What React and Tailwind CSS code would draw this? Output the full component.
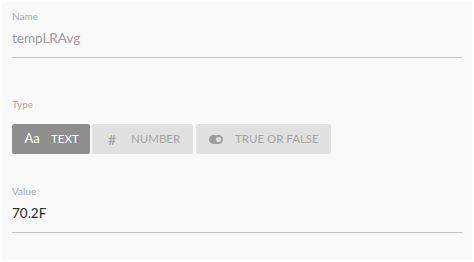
import React from 'react';

const types = [
  { id: 'text', label: 'TEXT', icon: 'Aa', width: 'w-[78px]' },
  { id: 'number', label: 'NUMBER', icon: '#', width: 'w-[101px]' },
  { id: 'bool', label: 'TRUE OR FALSE', icon: null, width: 'w-[135px]' },
];

const ToggleIcon = () => (
  <svg width="14" height="9" viewBox="0 0 14 9">
    <rect x="0" y="0" width="14" height="9" rx="4.5" fill="#9e9e9e" />
    <circle cx="9.5" cy="4.5" r="2.6" fill="#dedede" />
  </svg>
);

const Field = ({ label, value, dark }) => (
  <div className="px-[10px]">
    <div className="text-[10px] leading-[12px] text-[#aaaaaa]">{label}</div>
    <div
      className={`mt-[6px] text-[13.5px] leading-[20px] ${dark ? 'text-[#2b2b2b]' : 'text-[#9b9b9b]'}`}
    >
      {value}
    </div>
    <div className="mt-[9px] h-px bg-[#c4c4c4]" />
  </div>
);

export default function App() {
  const selected = 'text';
  return (
    <div
      className="w-[474px] h-[262px] bg-white p-[2px]"
      style={{ fontFamily: 'Lato, "Open Sans", sans-serif' }}
    >
      <div className="h-full bg-[#f9f9f9] pt-[8px] pr-[0px]">
        <Field label="Name" value="tempLRAvg" />

        <div className="px-[10px] mt-[40px]">
          <div className="text-[10px] leading-[12px] text-[#aaaaaa]">Type</div>
          <div className="mt-[14px] flex gap-[2px]">
            {types.map((t) => {
              const on = t.id === selected;
              return (
                <div
                  key={t.id}
                  className={`${t.width} h-[30px] flex items-center rounded-[2px] pl-[13px] text-[11.5px] ${
                    on ? 'bg-[#8e8e8e] text-white' : 'bg-[#e1e1e1] text-[#a4a4a4]'
                  } ${t.id === 'bool' ? 'ml-[1px]' : ''}`}
                >
                  <span
                    className={`inline-flex w-[14px] justify-center ${
                      on ? 'text-white' : 'text-[#9a9a9a]'
                    } ${t.id === 'text' ? 'text-[13px]' : 'text-[14px]'}`}
                  >
                    {t.icon ? t.icon : <ToggleIcon />}
                  </span>
                  <span className="ml-[12px]">{t.label}</span>
                </div>
              );
            })}
          </div>
        </div>

        <div className="mt-[31px]">
          <Field label="Value" value="70.2F" dark />
        </div>
      </div>
    </div>
  );
}
